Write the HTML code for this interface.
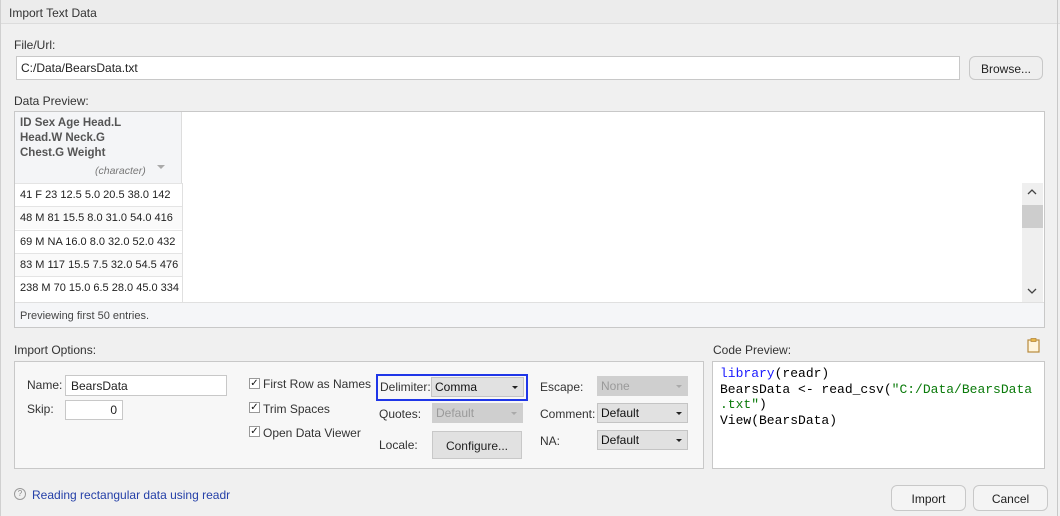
<!DOCTYPE html>
<html><head><style>
*{box-sizing:border-box;margin:0;padding:0}
body{width:1060px;height:516px;overflow:hidden;background:#f0f0f0;font-family:"Liberation Sans",sans-serif;font-size:12px;color:#333;position:relative}
.a{position:absolute}
.t{position:absolute;white-space:nowrap;line-height:14px}
.inp{position:absolute;background:#fff;border:1px solid #c8c8c8}
.sel{position:absolute;background:#e1e1e1;border:1px solid #c4c4c4;padding:2px 3px;font-size:12px;line-height:14px;color:#111}
.sel.dis{background:#cfcfcf;color:#9a9a9a;border-color:#cfcfcf}
.sel:after{content:"";position:absolute;right:5px;top:8px;border:3px solid transparent;border-top:3px solid #222;border-bottom:0}
.sel.dis:after{border-top-color:#aaa}
.btn{position:absolute;background:#efefef;border:1px solid #c8c8c8;border-radius:6px;text-align:center;color:#222}
.cb{position:absolute;width:11px;height:11px;border:1px solid #999;background:#fff;font-size:10px;line-height:9px;text-align:center;color:#111}
.row{position:absolute;left:15px;width:167px;height:23px;border-top:1px solid #e4e4e4;padding:5px 0 0 5px;font-size:11px;color:#222;white-space:nowrap}
code{font-family:"Liberation Mono",monospace;font-size:13px;line-height:15.5px}
</style></head><body>
<div class="a" style="left:0;top:0;width:1060px;height:24px;background:#ececec;border-bottom:1px solid #dcdcdc"></div>
<div class="a" style="left:1057px;top:0;width:1px;height:516px;background:#c8c8c8"></div>
<div class="a" style="left:0;top:0;width:1px;height:516px;background:#d0d0d0"></div>
<div class="t" style="left:9px;top:6px;color:#333">Import Text Data</div>
<div class="t" style="left:14px;top:38px">File/Url:</div>
<div class="inp" style="left:16px;top:56px;width:944px;height:24px;padding:4px 4px;color:#222">C:/Data/BearsData.txt</div>
<div class="btn" style="left:969px;top:56px;width:74px;height:24px;padding-top:5px">Browse...</div>
<div class="t" style="left:14px;top:94px">Data Preview:</div>
<div class="a" style="left:14px;top:111px;width:1031px;height:217px;background:#fff;border:1px solid #c8c8c8"></div>
<div class="a" style="left:15px;top:112px;width:167px;height:71px;background:#f4f5f7;border-right:1px solid #ddd"></div>
<div class="a" style="left:20px;top:116px;font-weight:bold;font-size:11.5px;line-height:15px;color:#555">ID Sex Age Head.L<br>Head.W Neck.G<br>Chest.G Weight</div>
<div class="t" style="left:95px;top:164px;font-style:italic;font-size:10.5px;color:#777">(character)</div>
<div class="a" style="left:157px;top:165px;border:4px solid transparent;border-top:4px solid #aaa"></div>
<div class="a" style="left:182px;top:183px;width:1px;height:119px;background:#e0e0e0"></div>
<div class="row" style="top:183px">41 F 23 12.5 5.0 20.5 38.0 142</div>
<div class="row" style="top:206px;background:#fafafa">48 M 81 15.5 8.0 31.0 54.0 416</div>
<div class="row" style="top:230px">69 M NA 16.0 8.0 32.0 52.0 432</div>
<div class="row" style="top:253px;background:#fafafa">83 M 117 15.5 7.5 32.0 54.5 476</div>
<div class="row" style="top:276px">238 M 70 15.0 6.5 28.0 45.0 334</div>
<div class="a" style="left:1022px;top:183px;width:21px;height:119px;background:#efefef"></div>
<div class="a" style="left:1022px;top:205px;width:21px;height:23px;background:#cdcdcd"></div>
<svg class="a" style="left:1027px;top:188px" width="10" height="8"><path d="M1 6 L5 2 L9 6" fill="none" stroke="#444" stroke-width="1.3"/></svg>
<svg class="a" style="left:1027px;top:287px" width="10" height="8"><path d="M1 2 L5 6 L9 2" fill="none" stroke="#444" stroke-width="1.3"/></svg>
<div class="a" style="left:15px;top:302px;width:1029px;height:25px;background:#f5f6f8;border-top:1px solid #e0e0e0"></div>
<div class="t" style="left:20px;top:309px;font-size:11px;color:#444">Previewing first 50 entries.</div>

<div class="t" style="left:14px;top:343px">Import Options:</div>
<div class="a" style="left:14px;top:361px;width:690px;height:108px;border:1px solid #c8c8c8;background:#f7f7f7"></div>
<div class="t" style="left:27px;top:378px">Name:</div>
<div class="inp" style="left:65px;top:375px;width:162px;height:21px;padding:3px 5px;color:#222">BearsData</div>
<div class="t" style="left:27px;top:402px">Skip:</div>
<div class="inp" style="left:65px;top:400px;width:58px;height:20px;padding:2px 5px;text-align:right;color:#222">0</div>
<div class="cb" style="left:249px;top:378px">✓</div><div class="t" style="left:263px;top:377px;font-size:12px">First Row as Names</div>
<div class="cb" style="left:249px;top:402px">✓</div><div class="t" style="left:263px;top:402px;font-size:12px">Trim Spaces</div>
<div class="cb" style="left:249px;top:426px">✓</div><div class="t" style="left:263px;top:426px;font-size:12px">Open Data Viewer</div>
<div class="a" style="left:376px;top:374px;width:152px;height:27px;border:2px solid #1f36e8"></div>
<div class="t" style="left:380px;top:380px">Delimiter:</div>
<div class="sel" style="left:431px;top:377px;width:93px;height:20px">Comma</div>
<div class="t" style="left:379px;top:407px">Quotes:</div>
<div class="sel dis" style="left:432px;top:403px;width:91px;height:20px">Default</div>
<div class="t" style="left:379px;top:438px">Locale:</div>
<div class="btn" style="left:432px;top:431px;width:90px;height:28px;border-radius:0;background:#e1e1e1;padding-top:7px">Configure...</div>
<div class="t" style="left:540px;top:380px">Escape:</div>
<div class="sel dis" style="left:597px;top:376px;width:91px;height:20px">None</div>
<div class="t" style="left:540px;top:407px">Comment:</div>
<div class="sel" style="left:597px;top:403px;width:91px;height:20px">Default</div>
<div class="t" style="left:540px;top:434px">NA:</div>
<div class="sel" style="left:597px;top:430px;width:91px;height:20px">Default</div>

<div class="t" style="left:713px;top:343px">Code Preview:</div>
<svg class="a" style="left:1026px;top:337px" width="16" height="16" viewBox="0 0 16 16"><rect x="2" y="3" width="11" height="12" fill="#fff5dc" stroke="#b88a3c" stroke-width="1.2"/><rect x="5" y="1.5" width="5" height="3" fill="#e8b84a" stroke="#b88a3c" stroke-width=".8"/></svg>
<div class="a" style="left:712px;top:361px;width:333px;height:108px;background:#fff;border:1px solid #c8c8c8"></div>
<div class="a" style="left:720px;top:366px;color:#000"><code><span style="color:#1a1aff">library</span>(readr)<br>BearsData &lt;- read_csv(<span style="color:#0a7a0a">"C:/Data/BearsData<br>.txt"</span>)<br>View(BearsData)</code></div>

<div class="a" style="left:14px;top:488px;width:12px;height:12px;border:1px solid #999;border-radius:50%;font-size:8px;line-height:10px;text-align:center;color:#888">?</div>
<div class="t" style="left:32px;top:488px;color:#2540a8">Reading rectangular data using readr</div>
<div class="btn" style="left:891px;top:485px;width:75px;height:26px;padding-top:6px;background:#f4f4f4">Import</div>
<div class="btn" style="left:973px;top:485px;width:75px;height:26px;padding-top:6px;background:#f4f4f4">Cancel</div>
</body></html>
